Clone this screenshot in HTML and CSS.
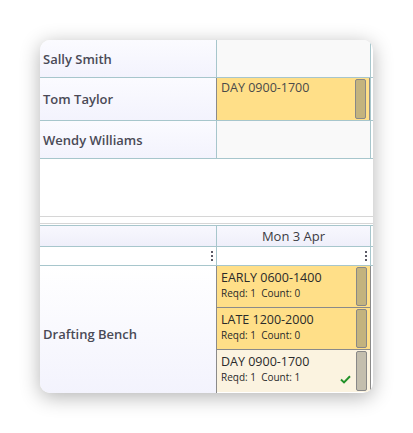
FILE: index.html
```html
<!DOCTYPE html>
<html>
<head>
<meta charset="utf-8">
<link rel="stylesheet" href="styles.css">
</head>
<body>
<div class="card">
  <div class="people">
    <div class="row r1">
      <div class="name">Sally Smith</div>
      <div class="slot"></div>
    </div>
    <div class="row r2">
      <div class="name">Tom Taylor</div>
      <div class="slot">
        <div class="shift top-shift">
          <span class="shift-title light">DAY 0900-1700</span>
          <span class="handle"></span>
        </div>
      </div>
    </div>
    <div class="row r3">
      <div class="name">Wendy Williams</div>
      <div class="slot"></div>
    </div>
  </div>
  <div class="spacer"></div>
  <div class="splitter"></div>
  <div class="bench">
    <div class="head">
      <div class="hcell"></div>
      <div class="hcell date">Mon 3 Apr</div>
    </div>
    <div class="tools">
      <div class="tcell"><span class="dots"><i></i><i></i><i></i></span></div>
      <div class="tcell"><span class="dots"><i></i><i></i><i></i></span></div>
    </div>
    <div class="body">
      <div class="bname">Drafting Bench</div>
      <div class="shifts">
        <div class="shift">
          <span class="shift-title">EARLY 0600-1400</span>
          <span class="shift-sub">Reqd: 1&nbsp; Count: 0</span>
          <span class="handle"></span>
        </div>
        <div class="shift">
          <span class="shift-title">LATE 1200-2000</span>
          <span class="shift-sub">Reqd: 1&nbsp; Count: 0</span>
          <span class="handle"></span>
        </div>
        <div class="shift filled">
          <span class="shift-title">DAY 0900-1700</span>
          <span class="shift-sub">Reqd: 1&nbsp; Count: 1</span>
          <svg class="check" width="11" height="9" viewBox="0 0 11 9"><path d="M1 4.6 L4 7.4 L10 1.2" fill="none" stroke="#23922a" stroke-width="2"/></svg>
          <span class="handle"></span>
        </div>
      </div>
    </div>
  </div>
</div>
</body>
</html>
```
FILE: styles.css
```css
html, body {
  margin: 0;
  padding: 0;
  background: #ffffff;
}
body {
  padding: 40px;
  font-family: "Open Sans", "DejaVu Sans", sans-serif;
}
.card {
  width: 333px;
  height: 353px;
  border-radius: 10px;
  overflow: hidden;
  background: #ffffff;
  box-shadow: 0 4px 20px rgba(0, 0, 0, 0.3);
  display: flex;
  flex-direction: column;
}
.row {
  display: grid;
  grid-template-columns: 177px 154px;
  border-bottom: 1px solid #a7c6cc;
}
.r1 { height: 37px; }
.r2 { height: 42px; }
.r3 { height: 37px; }
.name {
  border-right: 1px solid #a7c6cc;
  background: linear-gradient(#fbfbff, #f3f3fd);
  display: flex;
  align-items: center;
  padding-left: 3px;
  font-size: 13px;
  font-weight: 600;
  color: #4a4a56;
}
.slot {
  border-right: 1px solid #a7c6cc;
  background: #f9f9f9;
  position: relative;
}
.spacer {
  height: 57px;
}
.splitter {
  height: 6px;
  border-top: 1px solid #d6d6d6;
  border-bottom: 1px solid #d6d6d6;
  margin-bottom: 1px;
}
.bench {
  flex: 1;
  display: flex;
  flex-direction: column;
}
.head, .tools {
  display: grid;
  grid-template-columns: 177px 154px;
}
.head {
  height: 20px;
  border-top: 1px solid #a7c6cc;
  border-bottom: 1px solid #a7c6cc;
}
.hcell {
  border-right: 1px solid #a7c6cc;
  background: linear-gradient(#f8f8fe, #efeffa);
}
.date {
  display: flex;
  align-items: center;
  justify-content: center;
  font-size: 13px;
  color: #3c3c44;
}
.tools {
  height: 18px;
  border-bottom: 1px solid #a7c6cc;
}
.tcell {
  border-right: 1px solid #a7c6cc;
  background: #ffffff;
  display: flex;
  align-items: center;
  justify-content: flex-end;
  padding-right: 3px;
}
.dots {
  display: flex;
  flex-direction: column;
  gap: 2px;
}
.dots i {
  display: block;
  width: 2px;
  height: 2px;
  background: #5b5a66;
}
.body {
  flex: 1;
  display: grid;
  grid-template-columns: 176px 155px;
}
.bname {
  background: linear-gradient(#ffffff, #f3f3fd);
  display: flex;
  align-items: center;
  padding-left: 3px;
  padding-top: 9px;
  font-size: 13px;
  font-weight: 600;
  color: #4a4a56;
}
.shifts {
  display: flex;
  flex-direction: column;
  border-left: 1px solid #8a8a8a;
}
.shift {
  position: relative;
  height: 42px;
  box-sizing: border-box;
  border-bottom: 1px solid #8a8a8a;
  border-right: 1px solid #8a8a8a;
  background: #ffdf88;
  padding: 3px 0 0 4px;
  display: flex;
  flex-direction: column;
}
.shift.filled {
  background: #fbf3e0;
  border-bottom: none;
}
.top-shift {
  height: 100%;
  border: none;
  padding-top: 1px;
  border-left: 1px solid #8a8a8a;
  border-right: 1px solid #8a8a8a;
  margin-left: -1px;
  box-sizing: border-box;
  padding-left: 4px;
}
.shift-title {
  font-size: 12.5px;
  color: #2a2a2a;
  line-height: 17px;
}
.shift-title.light {
  color: #4a4a4a;
}
.shift-sub {
  font-size: 10px;
  color: #2a2a2a;
  line-height: 14px;
}
.handle {
  position: absolute;
  right: 3px;
  top: 1px;
  bottom: 1px;
  width: 9px;
  border: 1px solid #888888;
  border-radius: 2px;
  background: #c3b37e;
}
.filled .handle {
  background: #c3beae;
}
.check {
  position: absolute;
  right: 19px;
  bottom: 8px;
}
```
